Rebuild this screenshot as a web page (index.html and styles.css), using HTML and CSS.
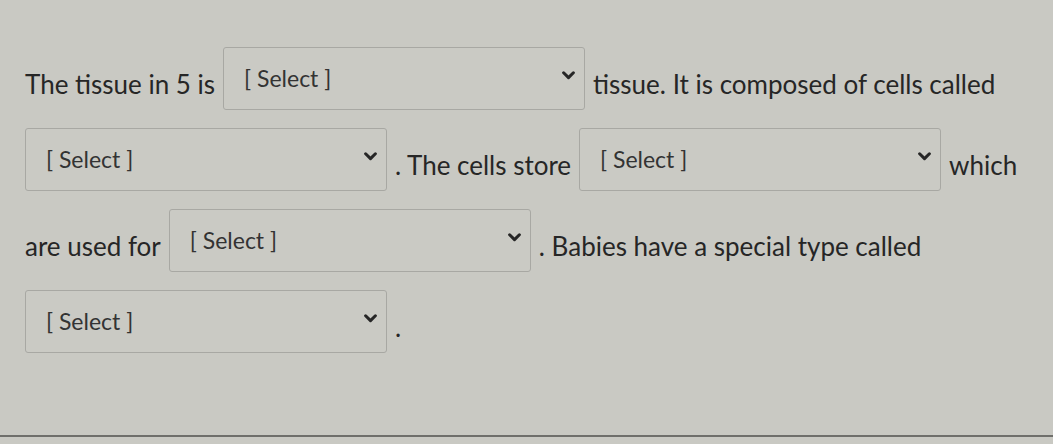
FILE: index.html
```html
<!DOCTYPE html>
<html lang="en">
<head>
<meta charset="utf-8">
<title>Quiz question</title>
<link rel="stylesheet" href="styles.css">
</head>
<body>
<div class="question">
  <div class="row">
    <span class="txt">The tissue in 5 is</span>
    <div class="sel"><span class="ph">[ Select ]</span><svg class="chev" viewBox="0 0 12 8"><polyline points="1.5,1.5 6,6 10.5,1.5"/></svg></div>
    <span class="txt">tissue. It is composed of cells called</span>
  </div>
  <div class="row">
    <div class="sel"><span class="ph">[ Select ]</span><svg class="chev" viewBox="0 0 12 8"><polyline points="1.5,1.5 6,6 10.5,1.5"/></svg></div>
    <span class="txt">. The cells store</span>
    <div class="sel"><span class="ph">[ Select ]</span><svg class="chev" viewBox="0 0 12 8"><polyline points="1.5,1.5 6,6 10.5,1.5"/></svg></div>
    <span class="txt">which</span>
  </div>
  <div class="row">
    <span class="txt">are used for</span>
    <div class="sel"><span class="ph">[ Select ]</span><svg class="chev" viewBox="0 0 12 8"><polyline points="1.5,1.5 6,6 10.5,1.5"/></svg></div>
    <span class="txt">. Babies have a special type called</span>
  </div>
  <div class="row">
    <div class="sel"><span class="ph">[ Select ]</span><svg class="chev" viewBox="0 0 12 8"><polyline points="1.5,1.5 6,6 10.5,1.5"/></svg></div>
    <span class="txt">.</span>
  </div>
</div>
<div class="footer-line"></div>
</body>
</html>
```

FILE: styles.css
```css
html, body {
  margin: 0;
  padding: 0;
  height: 100%;
}
body {
  background: #c9c9c3;
  font-family: Lato, "Liberation Sans", sans-serif;
  color: #262626;
  display: flex;
  flex-direction: column;
}
.question {
  padding: 47px 0 0 25px;
  display: flex;
  flex-direction: column;
  gap: 18px;
  flex: 1;
}
.row {
  display: flex;
  align-items: center;
  gap: 8px;
}
.txt {
  font-size: 26px;
  padding-top: 10px;
  white-space: nowrap;
}
.sel {
  width: 362px;
  height: 63px;
  box-sizing: border-box;
  border: 1px solid #a8a8a3;
  border-radius: 3px;
  background: #cacac4;
  display: flex;
  align-items: center;
  justify-content: space-between;
  padding: 0 9px 0 20px;
}
.ph {
  font-size: 23px;
  color: #333;
  margin-top: -2px;
}
.chev {
  width: 13px;
  height: 9px;
  fill: none;
  stroke: #262626;
  stroke-width: 2.8;
  stroke-linecap: round;
  stroke-linejoin: round;
  margin-top: -6px;
}
.footer-line {
  height: 2px;
  background: #6f6f6b;
  margin-bottom: 7px;
}
```
